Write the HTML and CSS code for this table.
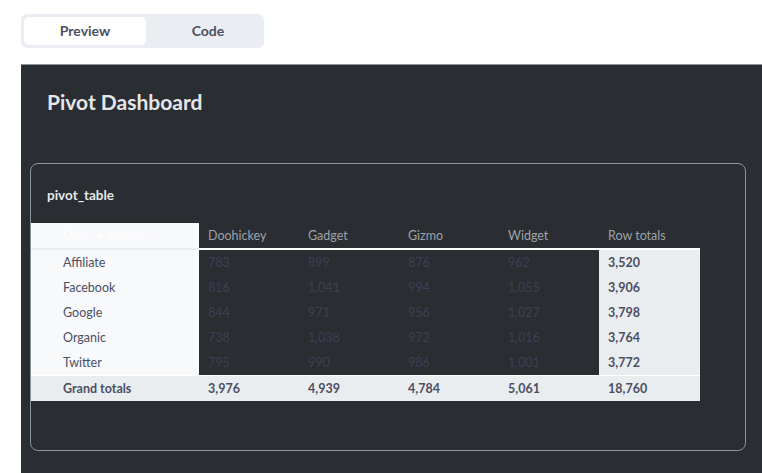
FILE: index.html
```html
<!DOCTYPE html>
<html>
<head>
<meta charset="utf-8">
<link rel="stylesheet" href="styles.css">
</head>
<body>
<div class="page">
  <div class="tabs">
    <div class="tab active">Preview</div>
    <div class="tab code">Code</div>
  </div>
  <div class="panel">
    <h1 class="title">Pivot Dashboard</h1>
    <div class="card">
      <div class="card-title">pivot_table</div>
      <table class="pivot">
        <thead>
          <tr>
            <th class="rowhead">User → Source</th>
            <th>Doohickey</th>
            <th>Gadget</th>
            <th>Gizmo</th>
            <th>Widget</th>
            <th>Row totals</th>
          </tr>
        </thead>
        <tbody>
          <tr><td class="rowhead">Affiliate</td><td>783</td><td>899</td><td>876</td><td>962</td><td class="tot">3,520</td></tr>
          <tr><td class="rowhead">Facebook</td><td>816</td><td>1,041</td><td>994</td><td>1,055</td><td class="tot">3,906</td></tr>
          <tr><td class="rowhead">Google</td><td>844</td><td>971</td><td>956</td><td>1,027</td><td class="tot">3,798</td></tr>
          <tr><td class="rowhead">Organic</td><td>738</td><td>1,038</td><td>972</td><td>1,016</td><td class="tot">3,764</td></tr>
          <tr><td class="rowhead">Twitter</td><td>795</td><td>990</td><td>986</td><td>1,001</td><td class="tot">3,772</td></tr>
          <tr class="grand"><td class="rowhead">Grand totals</td><td>3,976</td><td>4,939</td><td>4,784</td><td>5,061</td><td class="tot">18,760</td></tr>
        </tbody>
      </table>
    </div>
  </div>
</div>
</body>
</html>
```

FILE: styles.css
```css
html, body {
  margin: 0;
  padding: 0;
  overflow: hidden;
  background: #ffffff;
  font-family: Lato, "Open Sans", sans-serif;
}
.page {
  padding: 14px 0 0 21px;
}
.tabs {
  display: flex;
  width: 237px;
  padding: 3px;
  background: #eaedf1;
  border-radius: 6px;
}
.tab {
  width: 122px;
  height: 28px;
  line-height: 28px;
  text-align: center;
  font-size: 14px;
  font-weight: 700;
  color: #4b5064;
  border-radius: 5px;
}
.tab.active {
  background: #ffffff;
}
.tab.code {
  width: 106px;
  padding-left: 9px;
}
.panel {
  box-sizing: border-box;
  margin-top: 16px;
  width: 741px;
  height: 409px;
  background: #2a2d32;
  border-top: 1px solid #8e949c;
  padding: 25px 0 0 9px;
}
.title {
  margin: 0 0 49px 17px;
  font-size: 21px;
  font-weight: 700;
  color: #e4e6e9;
  line-height: 24px;
}
.card {
  width: 714px;
  height: 286px;
  border: 1px solid #8d9299;
  border-radius: 8px;
}
.card-title {
  padding: 23px 0 0 16px;
  font-size: 13.5px;
  font-weight: 700;
  color: #e6e8eb;
  line-height: 16px;
  height: 36px;
}
.pivot {
  border-collapse: collapse;
  font-size: 12.5px;
}
.pivot th, .pivot td {
  width: 91px;
  height: 25px;
  padding: 0 0 0 9px;
  text-align: left;
  font-weight: 400;
  color: #3c4054;
  white-space: nowrap;
}
.pivot th {
  color: #9ea3aa;
  border-bottom: 2px solid #ffffff;
  height: 25px;
}
.pivot .rowhead {
  width: 136px;
  padding-left: 32px;
  background: #f8f9fb;
  color: #4a4f63;
}
.pivot th.rowhead {
  color: #ffffff;
  border-bottom: 2px solid #eaedf0;
}
.pivot td.tot {
  width: 92px;
  background: #eaedf0;
  color: #4a4f63;
  font-weight: 700;
}
.pivot .grand td {
  background: #eaedf0;
  color: #4a4f63;
  font-weight: 700;
  border-top: 1px solid #ffffff;
}
```
